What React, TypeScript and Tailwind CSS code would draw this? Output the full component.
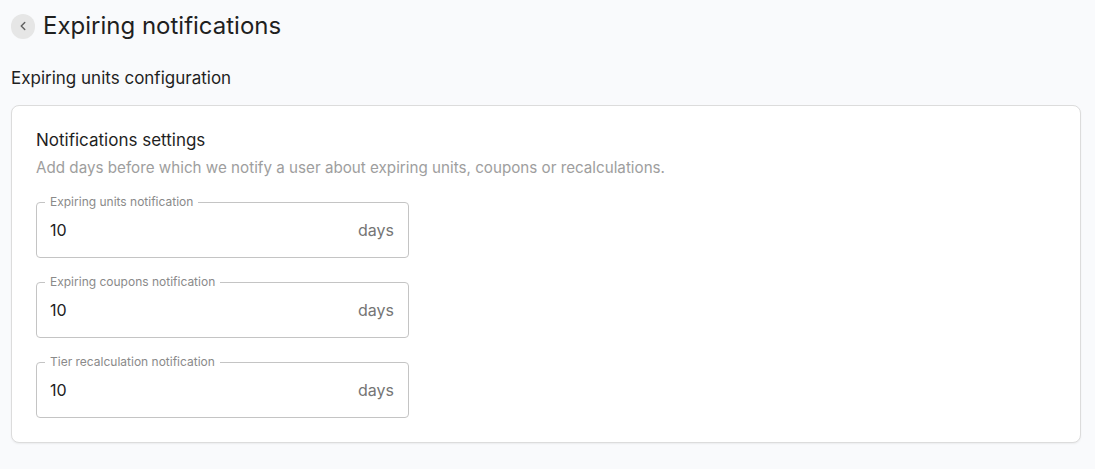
import React from 'react';
import { ChevronLeft } from 'lucide-react';

interface DaysFieldProps {
  label: string;
  value: string;
}

// Outlined input with the label sitting on the top border (notched look)
const DaysField: React.FC<DaysFieldProps> = ({ label, value }) => (
  <div className="relative flex h-[56px] w-[373px] items-center justify-between rounded-[4px] border border-[#c4c4c4] pl-[13px] pr-[14px]">
    <span className="absolute -top-[8px] left-[8px] bg-white px-[5px] text-[12px] leading-[14px] text-[#8a8a8a]">
      {label}
    </span>
    <span className="text-[16px] text-[#212121]">{value}</span>
    <span className="text-[16px] text-[#757575]">days</span>
  </div>
);

export default function App() {
  const fields = [
    { label: 'Expiring units notification', value: '10' },
    { label: 'Expiring coupons notification', value: '10' },
    { label: 'Tier recalculation notification', value: '10' },
  ];

  return (
    <div
      className="min-h-[469px] bg-[#f9fafc] px-[11px] pt-[13px] text-[#212121]"
      style={{ fontFamily: 'Inter, "Noto Sans", sans-serif' }}
    >
      {/* Header */}
      <div className="flex items-center gap-[8px]">
        <button className="flex h-[25px] w-[24px] items-center justify-center rounded-full bg-[#e6e6e6] text-[#616161]">
          <ChevronLeft className="h-[14px] w-[14px]" strokeWidth={2.5} />
        </button>
        <h1 className="text-[24px] leading-[26px] font-normal text-[#1f1f1f]">Expiring notifications</h1>
      </div>

      <h2 className="mt-[27px] text-[17px] leading-[24px] text-[#1f1f1f]">Expiring units configuration</h2>

      {/* Card */}
      <div className="mt-[15px] w-[1070px] rounded-[8px] border border-[#dcdcdc] bg-white px-[24px] pt-[22px] pb-[24px] shadow-[0_1px_2px_rgba(0,0,0,0.06)]">
        <h3 className="text-[17px] leading-[24px] text-[#1f1f1f]">Notifications settings</h3>
        <p className="mt-[6px] text-[15.2px] leading-[20px] text-[#9e9e9e]">
          Add days before which we notify a user about expiring units, coupons or recalculations.
        </p>
        <div className="mt-[24px] flex flex-col gap-[24px]">
          {fields.map((f) => (
            <DaysField key={f.label} label={f.label} value={f.value} />
          ))}
        </div>
      </div>
    </div>
  );
}
